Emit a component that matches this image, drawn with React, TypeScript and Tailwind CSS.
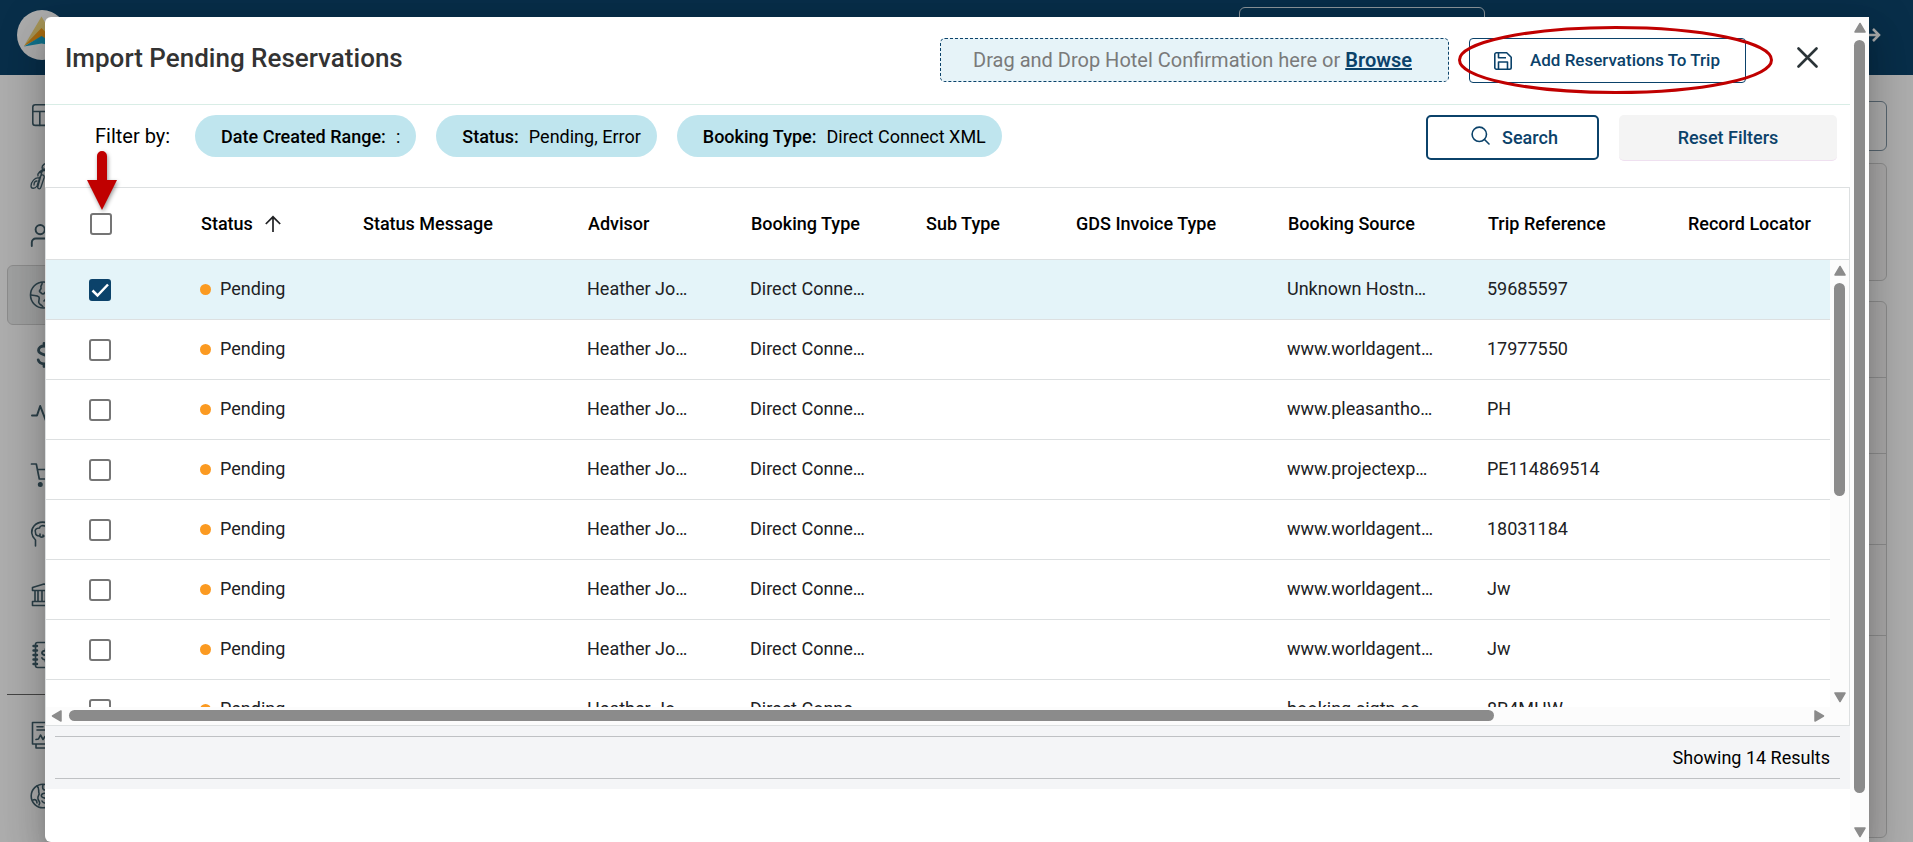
import type { ReactNode } from "react";

type Row = { source: string; trip: string; selected?: boolean };

const rows: Row[] = [
  { source: "Unknown Hostn…", trip: "59685597", selected: true },
  { source: "www.worldagent…", trip: "17977550" },
  { source: "www.pleasantho…", trip: "PH" },
  { source: "www.projectexp…", trip: "PE114869514" },
  { source: "www.worldagent…", trip: "18031184" },
  { source: "www.worldagent…", trip: "Jw" },
  { source: "www.worldagent…", trip: "Jw" },
  { source: "booking.sigtn.co…", trip: "8R4MHW" },
];

const filters = [
  { name: "Date Created Range:", value: ":" },
  { name: "Status:", value: "Pending, Error" },
  { name: "Booking Type:", value: "Direct Connect XML" },
];

function NavIcon({ children }: { children: ReactNode }) {
  return (
    <svg
      viewBox="0 0 28 28"
      className="size-7 overflow-visible"
      fill="none"
      stroke="currentColor"
      strokeWidth="1.6"
      strokeLinecap="round"
      strokeLinejoin="round"
      aria-hidden="true"
    >
      {children}
    </svg>
  );
}

const mainNav: { label: string; icon: ReactNode; active?: boolean }[] = [
  {
    label: "Dashboard",
    icon: (
      <>
        <rect x="2.8" y="3.8" width="22" height="20.6" rx="2.5" />
        <path d="M3 10.5h22M9.8 10.5v14" />
      </>
    ),
  },
  {
    label: "Itineraries",
    icon: (
      <g strokeWidth="1.3">
        <path d="M9 17c-4-1-8 4-8 8 0 3 4 3 6 0l3-9c1-3 5-3 4 1l-3 9c-1 3-4 2-3-1l5-18" />
        <path d="M4 24c0-2 1-4 3-4M8 15c-1-3 3-6 7-7M12 7c0-3 3-5 6-5M10 12c2-3 6-3 9-1" />
      </g>
    ),
  },
  {
    label: "Contacts",
    icon: (
      <g strokeWidth="1.9">
        <circle cx="10.2" cy="8.6" r="4.6" />
        <path d="M1.8 25v-3.5a4 4 0 0 1 4-4H15a4 4 0 0 1 4 4V25" />
      </g>
    ),
  },
  {
    label: "Trips",
    active: true,
    icon: (
      <>
        <circle cx="13.5" cy="14" r="13" />
        <path d="M1 14c3 1 6 0 8 2 1 2-1 4 0 6 1 2 3 2 4 4M12 1.5c1 2-2 3-1 5s-3 3-1 4.500c2 1 1 2 3 2s2-3 4-3M14 20c2-3 5-3 7-1" />
      </>
    ),
  },
  {
    label: "Payments",
    icon: <path strokeWidth="2.8" d="M20 8.500C19 5.500 16.500 5 14 5c-3 0-5.500 1.500-5.500 4.300 0 5.900 12 3.200 12 9 0 3-3 4.500-6.300 4.500-3.200 0-5.400-1.300-6-4M14 2.500V5M14 23v2.500" />,
  },
  {
    label: "Activity",
    icon: <path strokeWidth="2" d="M2 14.500h5L10.200 5l7 18 3-8.500H26" />,
  },
  {
    label: "Bookings",
    icon: (
      <>
        <path strokeWidth="1.7" d="M1.500 3h4.800l3 15H22l3-9.500H7.500" />
        <circle cx="10.300" cy="23.500" r="1.700" fill="currentColor" />
        <circle cx="20.500" cy="23.500" r="1.700" fill="currentColor" />
      </>
    ),
  },
  {
    label: "Training",
    icon: (
      <>
        <path d="M5.500 25v-6C1 15 .5 9 4 5s9-4.500 14-3 7 6 7 9" />
        <path d="M15 5c-3-1-5 0-5.500 2C6 7 4.500 9 5.500 11.500c0 2.500 2 3.500 4 3.500 1 1.500 3 1.500 4.500 0M10 13v2M13 14v2" />
      </>
    ),
  },
  {
    label: "Accounting",
    icon: <path d="M2.500 20.500h23v4h-23zM2.500 9.500V6.500L14 3l11.500 3.500v3zM5 10v10M8 10v10M12 10v10M15.500 10v10M20 10v10M23 10v10" />,
  },
  {
    label: "Ledger",
    icon: (
      <>
        <rect x="5.500" y="1.500" width="20" height="25" rx="2" />
        <path strokeWidth="2.400" d="M3.500 5h3.500M3.500 9.500h3.500M3.500 14h3.500M3.500 18.500h3.500M3.500 23h3.500" />
        <path strokeWidth="1.900" d="M19 11c-1-2-7-2-7 1s7 1.500 7 4.500-6 3-7 .5M15.500 8v2M15.500 18.500v2" />
      </>
    ),
  },
];

const extraNav: { label: string; icon: ReactNode; active?: boolean }[] = [
  {
    label: "Reports",
    icon: <path d="M2.500 1.500h21v21.500h-21zM6 23v4h21V6h-3M7 5.800h6M7 9h8M6 18.500l2.500-.5 2-4 2.500 4.500 2-3 2 2 4-6" />,
  },
  {
    label: "Resources",
    icon: (
      <>
        <circle cx="13" cy="15" r="11.800" />
        <path d="M7 5c3 2 1 5 2 7s-2 3-1 6 3 3 1 6M3 19c2-1 4 0 4 3M13 4c-1 3 0 5 2 5M17 13c-4-2-7 1-5 3s6 0 6 4-5 2-6 0" />
      </>
    ),
  },
];

function NavItem({ label, icon, active }: { label: string; icon: ReactNode; active?: boolean }) {
  return (
    <a
      href="#"
      aria-label={label}
      className={
        active
          ? "flex h-[60px] items-center rounded-md border border-[#d0d0d0] bg-[#eceded] pl-[22px]"
          : "flex h-[60px] items-center border border-transparent pl-[22px]"
      }
    >
      <NavIcon>{icon}</NavIcon>
    </a>
  );
}

function Triangle({ direction }: { direction: "up" | "down" | "left" | "right" }) {
  const shapes = {
    up: "M6 1.500 11 10H1z",
    down: "M6 10.500 1 2h10z",
    left: "M1.500 6 10 1v10z",
    right: "M10.500 6 2 1v10z",
  };
  return (
    <svg viewBox="0 0 12 12" className="size-3 shrink-0" aria-hidden="true">
      <path d={shapes[direction]} fill="#8b8b8b" stroke="#8b8b8b" strokeWidth="1.500" strokeLinejoin="round" />
    </svg>
  );
}

function Check({ label, checked }: { label: string; checked?: boolean }) {
  return (
    <span className="relative block size-[22px]">
      <input
        type="checkbox"
        aria-label={label}
        defaultChecked={checked}
        className="peer block size-[22px] appearance-none rounded-[3px] border-2 border-[#757575] bg-white checked:border-[#0b426a] checked:bg-[#0b426a]"
      />
      <svg
        viewBox="0 0 22 22"
        className="pointer-events-none absolute inset-0 hidden size-[22px] peer-checked:block"
        fill="none"
        stroke="#fff"
        strokeWidth="2.500"
        aria-hidden="true"
      >
        <path d="m3.500 11.500 5 5L19 5.500" />
      </svg>
    </span>
  );
}

function Backdrop() {
  return (
    <div className="flex h-full flex-col bg-white">
      <header className="flex h-[75px] shrink-0 items-start bg-[#0c446c]">
        <svg viewBox="0 0 50 50" className="mt-[10px] ml-[17px] size-[50px]" aria-hidden="true">
          <circle cx="25" cy="25" r="25" fill="#fff" />
          <path d="M24.500 6.500 7 36l17.500-12L42 36z" fill="#f5dc80" />
          <path d="M24.500 18 7 36l17.500-9L42 36z" fill="#f9a11b" />
          <path d="M24.500 26 7 36.500l17.500-3 17.500 3z" fill="#18a9cf" />
        </svg>
        <div className="mt-[7px] mr-[373px] ml-auto h-11 w-[246px] rounded-md border border-[#cfdbe4]" />
        <svg
          viewBox="0 0 24 24"
          className="mt-[23px] mr-[31px] size-6 text-white"
          fill="none"
          stroke="currentColor"
          strokeWidth="2.500"
          aria-hidden="true"
        >
          <path d="M4 12h17M15 6l6 6-6 6" />
        </svg>
      </header>
      <div className="flex min-h-0 flex-1">
        <nav className="w-[240px] px-[7px] pt-[10px] text-[#41606d]" aria-label="Main">
          {mainNav.map((item) => (
            <NavItem key={item.label} {...item} />
          ))}
          <hr className="mt-[9px] mb-[10px] border-[#666]" />
          {extraNav.map((item) => (
            <NavItem key={item.label} {...item} />
          ))}
        </nav>
        <div className="flex flex-1 flex-col pt-[26px] pr-[26px]">
          <div className="h-[50px] shrink-0 rounded-md border border-[#8297a6]" />
          <div className="mt-3 h-[118px] shrink-0 rounded-md border border-[#d0d0d0] bg-[#fbfaf9]" />
          <div className="mt-5 mb-1 flex flex-1 flex-col rounded-md border border-[#d0d0d0] bg-[#fbfaf9]">
            <div className="h-[76px] border-b border-[#d0d0d0]" />
            <div className="h-[76px] border-b border-[#d0d0d0]" />
            <div className="h-[91px] border-b border-[#d0d0d0]" />
            <div className="h-[91px] border-b border-[#d0d0d0]" />
          </div>
        </div>
      </div>
    </div>
  );
}

function ReservationsTable() {
  const th = "p-0 pt-0.5 pl-px text-left font-medium whitespace-nowrap";
  return (
    <div className="flex min-h-0 flex-1 flex-col border border-[#dde0e1]">
      <div className="relative min-h-0 flex-1 overflow-hidden">
        <table className="w-full table-fixed border-collapse text-[18px] leading-6 text-[#202124]">
          <colgroup>
            <col className="w-[154px]" />
            <col className="w-[162px]" />
            <col className="w-[225px]" />
            <col className="w-[163px]" />
            <col className="w-[175px]" />
            <col className="w-[150px]" />
            <col className="w-[212px]" />
            <col className="w-[200px]" />
            <col className="w-[200px]" />
            <col />
          </colgroup>
          <thead className="text-black">
            <tr className="h-[71px] border-b border-[#dde0e1]">
              <th className="p-0 pt-0.5 pl-[44px]">
                <Check label="Select all reservations" />
              </th>
              <th className={th} aria-sort="ascending">
                <span className="flex items-center gap-[11px]">
                  Status
                  <svg viewBox="0 0 18 18" className="size-[18px]" fill="none" stroke="#202124" strokeWidth="1.700" aria-hidden="true">
                    <path d="M9 17V2M1.800 9 9 1.800 16.200 9" />
                  </svg>
                </span>
              </th>
              <th className={th}>Status Message</th>
              <th className={th}>Advisor</th>
              <th className={th}>Booking Type</th>
              <th className={th}>Sub Type</th>
              <th className={th}>GDS Invoice Type</th>
              <th className={th}>Booking Source</th>
              <th className={th}>Trip Reference</th>
              <th className={th}>Record Locator</th>
            </tr>
          </thead>
          <tbody>
            {rows.map((row, i) => (
              <tr
                key={i}
                className={row.selected ? "h-[60px] border-b border-[#dde0e1] bg-[#e4f4f9]" : "h-[60px] border-b border-[#dde0e1]"}
              >
                <td className="p-0 pt-0.5 pl-[43px]">
                  <Check label={`Select reservation ${row.trip}`} checked={row.selected} />
                </td>
                <td className="p-0">
                  <span className="flex items-center gap-[9px]">
                    <span className="size-[11px] rounded-full bg-[#fb9a21]" />
                    Pending
                  </span>
                </td>
                <td className="p-0" />
                <td className="p-0">Heather Jo…</td>
                <td className="p-0">Direct Conne…</td>
                <td className="p-0" />
                <td className="p-0" />
                <td className="p-0">{row.source}</td>
                <td className="p-0">{row.trip}</td>
                <td className="p-0" />
              </tr>
            ))}
          </tbody>
        </table>
        <div className="absolute top-[72px] right-0 bottom-0 flex w-[19px] flex-col items-center bg-[#fcfcfc] pt-[5px] pb-1">
          <Triangle direction="up" />
          <div className="mt-1.5 mb-auto h-[213px] w-[11px] rounded-full bg-[#8b8b8b]" />
          <Triangle direction="down" />
        </div>
      </div>
      <div className="flex h-[18px] shrink-0 items-start bg-[#fcfcfc] pt-[3px] pr-6 pl-[5px]">
        <Triangle direction="left" />
        <div className="mx-1.5 flex-1">
          <div className="h-[11px] w-[82%] rounded-full bg-[#8b8b8b]" />
        </div>
        <Triangle direction="right" />
      </div>
    </div>
  );
}

export default function App() {
  return (
    <div className="relative h-screen overflow-hidden font-['Roboto',sans-serif] text-black">
      <Backdrop />
      <div className="absolute inset-0 flex bg-black/32 pt-[17px] pr-[44px] pl-[45px]">
        <div
          role="dialog"
          aria-labelledby="dialog-title"
          className="flex min-w-0 flex-1 overflow-hidden rounded-md rounded-r-none bg-white shadow-[0_11px_15px_-7px_rgba(0,0,0,0.2),0_24px_38px_3px_rgba(0,0,0,0.14),0_9px_46px_8px_rgba(0,0,0,0.12)]"
        >
          <div className="flex min-w-0 flex-1 flex-col">
            <div className="flex h-[88px] shrink-0 items-start border-b border-[#d9ede6] pt-[21px] pr-8 pl-5">
              <h1 id="dialog-title" className="mt-1 text-[26px] leading-8 font-medium text-[#333]">
                Import Pending Reservations
              </h1>
              <div className="ml-auto flex h-11 items-center rounded-[5px] border border-dashed border-[#0b426a] bg-[#e6f3f8] pr-9 pl-8 text-[20px] text-[#7a7a7a]">
                <span>
                  Drag and Drop Hotel Confirmation here or{" "}
                  <a href="#" className="font-semibold text-[#0b426a] underline decoration-2">
                    Browse
                  </a>
                </span>
              </div>
              <div className="relative ml-5">
                <button
                  type="button"
                  className="flex h-[45px] items-center gap-[17px] rounded-[4px] border border-[#0b426a] bg-white pr-[25px] pl-[23px] text-[17px] font-medium whitespace-nowrap text-[#0b426a]"
                >
                  <svg viewBox="0 0 20 20" className="size-5" fill="none" stroke="currentColor" strokeWidth="1.600" strokeLinejoin="round" aria-hidden="true">
                    <path d="M3.500 1.800h10.200l4.500 4.500v10.200a1.700 1.700 0 0 1-1.700 1.700h-13a1.700 1.700 0 0 1-1.700-1.700v-13a1.700 1.700 0 0 1 1.700-1.700z" />
                    <path d="M5.500 2v4.700H13M5.500 18v-7h9v7" />
                  </svg>
                  Add Reservations To Trip
                </button>
                <svg
                  viewBox="0 0 315 68"
                  className="pointer-events-none absolute -top-3 -left-[11px] h-[68px] w-[315px]"
                  fill="none"
                  stroke="#c00000"
                  strokeWidth="3"
                  aria-hidden="true"
                >
                  <ellipse cx="157.500" cy="34" rx="156" ry="32.500" />
                </svg>
              </div>
              <button type="button" aria-label="Close" className="mt-[9px] ml-[51px] text-[#2b3438]">
                <svg viewBox="0 0 21 21" className="size-[21px]" fill="none" stroke="currentColor" strokeWidth="2.600" strokeLinecap="round" aria-hidden="true">
                  <path d="m1.500 1.500 18 18M19.500 1.500l-18 18" />
                </svg>
              </button>
            </div>

            <div className="flex h-[82px] shrink-0 items-start gap-5 pt-[10px] pr-[13px] pl-[50px] text-[18px]">
              <div className="relative mr-[5px] text-[20px] leading-[42px]">
                Filter by:
                <svg viewBox="0 0 30 60" className="absolute top-9 -left-2 h-[60px] w-[30px] overflow-visible drop-shadow-[1px_2px_2px_rgba(0,0,0,0.4)]" aria-hidden="true">
                  <path d="M10 5a5 5 0 0 1 10 0v24h10L15 59 0 29h10z" fill="#c00000" />
                </svg>
              </div>
              {filters.map((filter) => (
                <button
                  key={filter.name}
                  type="button"
                  className="flex h-[42px] items-center gap-[10px] rounded-full bg-[#bfe5ee] pr-4 pl-[26px] whitespace-nowrap"
                >
                  <span className="font-medium">{filter.name}</span>
                  <span>{filter.value}</span>
                </button>
              ))}
              <button
                type="button"
                className="ml-auto flex h-[45px] w-[173px] items-center justify-center gap-3 rounded-[5px] border-2 border-[#0b426a] bg-white pl-1 font-medium text-[#0b426a]"
              >
                <svg viewBox="0 0 19 19" className="mb-1 size-[19px]" fill="none" stroke="currentColor" strokeWidth="1.600" strokeLinecap="round" aria-hidden="true">
                  <circle cx="8.300" cy="8.300" r="7.200" />
                  <path d="m13.500 13.500 4.500 4.500" />
                </svg>
                Search
              </button>
              <button
                type="button"
                className="h-[46px] w-[218px] rounded-[5px] border-b border-[#efe0f0] bg-[#f4f4f4] font-medium text-[#0b426a]"
              >
                Reset Filters
              </button>
            </div>

            <ReservationsTable />

            <footer className="shrink-0 bg-[#f4f5f7] p-[10px]">
              <div className="flex h-[43px] items-center justify-end border-y border-[#bfc1c4] pr-[10px] text-[18px]">
                Showing 14 Results
              </div>
            </footer>
            <div className="h-[53px] shrink-0" />
          </div>

          <div className="flex w-[19px] shrink-0 flex-col items-center bg-[#fcfcfc] pt-[5px] pb-1">
            <Triangle direction="up" />
            <div className="mt-1.5 mb-[33px] w-[11px] flex-1 rounded-full bg-[#8b8b8b]" />
            <Triangle direction="down" />
          </div>
        </div>
      </div>
    </div>
  );
}
